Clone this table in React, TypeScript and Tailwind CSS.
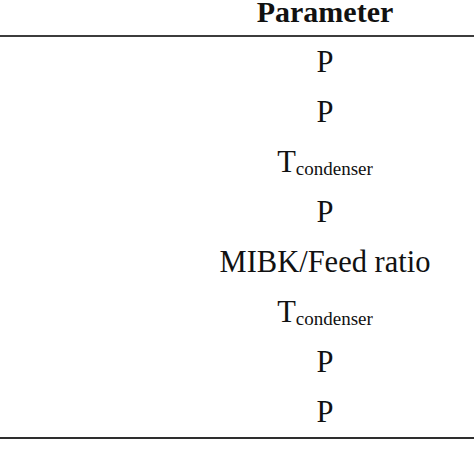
const rows: { main: string; sub?: string }[] = [
	{ main: "P" },
	{ main: "P" },
	{ main: "T", sub: "condenser" },
	{ main: "P" },
	{ main: "MIBK/Feed ratio" },
	{ main: "T", sub: "condenser" },
	{ main: "P" },
	{ main: "P" },
];

export default function App() {
	return (
		<main className="w-[474px] h-[474px] bg-white overflow-hidden text-[#111] font-['Liberation_Serif','Times_New_Roman',serif]">
			<div className="flex h-[35px] border-b-2 border-[#3c3c3c] box-content">
				<div className="w-[176px]" />
				<div className="flex-1 flex items-end justify-center pb-[8px] text-[30px] leading-[30px] font-bold">
					Parameter
				</div>
			</div>

			<div className="flex flex-col border-b-2 border-[#2e2e2e]">
				{rows.map((row, i) => (
					<div key={i} className="flex h-[50px]">
						<div className="w-[176px]" />
						<div className="flex-1 text-center text-[30.5px] leading-[50px] whitespace-nowrap">
							{row.main}
							{row.sub && (
								<sub className="text-[19px] leading-none bottom-[-3px]">
									{row.sub}
								</sub>
							)}
						</div>
					</div>
				))}
			</div>
		</main>
	);
}
